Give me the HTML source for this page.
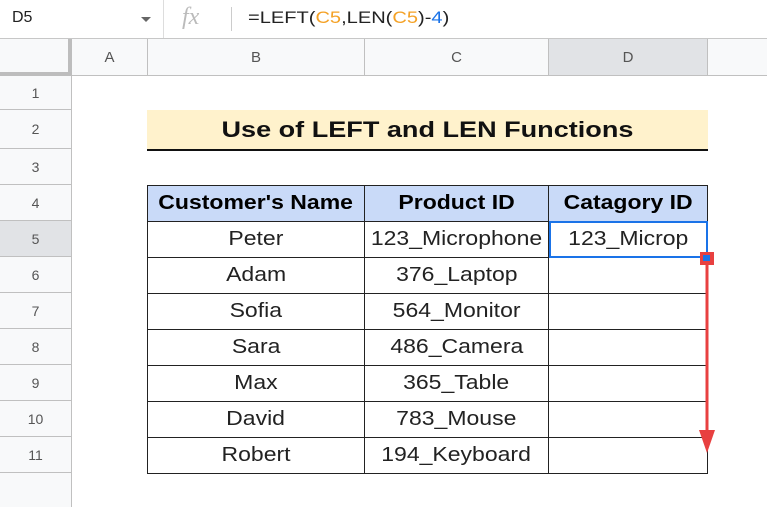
<!DOCTYPE html>
<html><head><style>
body{margin:0;width:767px;height:507px;overflow:hidden;background:#fff;font-family:"Liberation Sans",Arial,sans-serif;position:relative}
.a{position:absolute}
.fb{left:0;top:0;width:767px;height:38px;border-bottom:1px solid #c7c7c7;background:#fff}
.ch{top:39px;height:37px;background:#f8f9fa;border-bottom:1px solid #c0c0c0;font-size:15px;color:#555;text-align:center;line-height:37px;border-right:1px solid #c0c0c0;box-sizing:border-box}
.rh{left:0;width:72px;background:#f8f9fa;border-right:1px solid #c0c0c0;border-bottom:1px solid #c0c0c0;box-sizing:border-box;font-size:14px;color:#555;text-align:center}
table{position:absolute;left:147px;top:185px;border-collapse:collapse;font-size:20px}
tr{height:36px}
td{border:1.5px solid #222;padding:0;text-align:center;color:#222}
th{border:1.5px solid #222;background:#c9daf8;font-weight:bold;font-size:20px;padding:0}
.s{display:inline-block;transform:scaleX(1.15)}
</style></head><body>
<div class="a fb"></div>
<div class="a" style="left:12px;top:9px;font-size:16px;color:#222">D5</div>
<div class="a" style="left:141px;top:17px;width:0;height:0;border-left:5px solid transparent;border-right:5px solid transparent;border-top:5px solid #666"></div>
<div class="a" style="left:163px;top:0;width:1px;height:38px;background:#ddd"></div>
<div class="a" style="left:182px;top:4px;font-size:24px;font-style:italic;font-family:'Liberation Serif',serif;color:#bbb">fx</div>
<div class="a" style="left:231px;top:7px;width:1px;height:24px;background:#ccc"></div>
<div class="a" style="left:248px;top:8px;font-size:17px;color:#222;transform:scaleX(1.18);transform-origin:left">=LEFT(<span style="color:#f4a125">C5</span>,LEN(<span style="color:#f4a125">C5</span>)-<span style="color:#1a73e8">4</span>)</div>
<div class="a ch" style="left:0;width:72px;border-right:4px solid #bdbdbd;border-bottom:4px solid #bdbdbd"></div>
<div class="a ch" style="left:72px;width:76px">A</div>
<div class="a ch" style="left:148px;width:217px">B</div>
<div class="a ch" style="left:365px;width:184px">C</div>
<div class="a ch" style="left:549px;width:159px;background:#e1e3e6">D</div>
<div class="a ch" style="left:708px;width:59px;border-right:none"></div>
<div class="a rh" style="top:76px;height:34px;line-height:34px">1</div>
<div class="a rh" style="top:110px;height:39px;line-height:39px">2</div>
<div class="a rh" style="top:149px;height:36px;line-height:36px">3</div>
<div class="a rh" style="top:185px;height:36px;line-height:36px">4</div>
<div class="a rh" style="top:221px;height:36px;line-height:36px;background:#e1e3e6">5</div>
<div class="a rh" style="top:257px;height:36px;line-height:36px">6</div>
<div class="a rh" style="top:293px;height:36px;line-height:36px">7</div>
<div class="a rh" style="top:329px;height:36px;line-height:36px">8</div>
<div class="a rh" style="top:365px;height:36px;line-height:36px">9</div>
<div class="a rh" style="top:401px;height:36px;line-height:36px">10</div>
<div class="a rh" style="top:437px;height:36px;line-height:36px">11</div>
<div class="a rh" style="top:473px;height:34px;border-bottom:none"></div>
<div class="a" style="left:147px;top:110px;width:561px;height:39px;background:#fff2cc;border-bottom:2px solid #111;text-align:center;font-weight:bold;font-size:22px;line-height:40px;color:#111"><span style="display:inline-block;transform:scaleX(1.23)">Use of LEFT and LEN Functions</span></div>
<table>
<tr><th style="width:216px"><span class="s">Customer's Name</span></th><th style="width:183px"><span class="s">Product ID</span></th><th style="width:158px"><span class="s">Catagory ID</span></th></tr>
<tr><td><span class="s">Peter</span></td><td><span class="s">123_Microphone</span></td><td><span class="s">123_Microp</span></td></tr>
<tr><td><span class="s">Adam</span></td><td><span class="s">376_Laptop</span></td><td></td></tr>
<tr><td><span class="s">Sofia</span></td><td><span class="s">564_Monitor</span></td><td></td></tr>
<tr><td><span class="s">Sara</span></td><td><span class="s">486_Camera</span></td><td></td></tr>
<tr><td><span class="s">Max</span></td><td><span class="s">365_Table</span></td><td></td></tr>
<tr><td><span class="s">David</span></td><td><span class="s">783_Mouse</span></td><td></td></tr>
<tr><td><span class="s">Robert</span></td><td><span class="s">194_Keyboard</span></td><td></td></tr>
</table>
<div class="a" style="left:549px;top:221px;width:155px;height:33px;border:2px solid #1a73e8"></div>
<svg class="a" style="left:690px;top:248px" width="30" height="210">
<line x1="17" y1="10" x2="17" y2="185" stroke="#e84040" stroke-width="3"/>
<polygon points="9,182 25,182 17,205" fill="#e84040"/>
<rect x="10" y="4" width="14" height="13" fill="#e84040"/>
<rect x="13" y="7" width="7" height="6" fill="#1a73e8"/>
</svg>
</body></html>
